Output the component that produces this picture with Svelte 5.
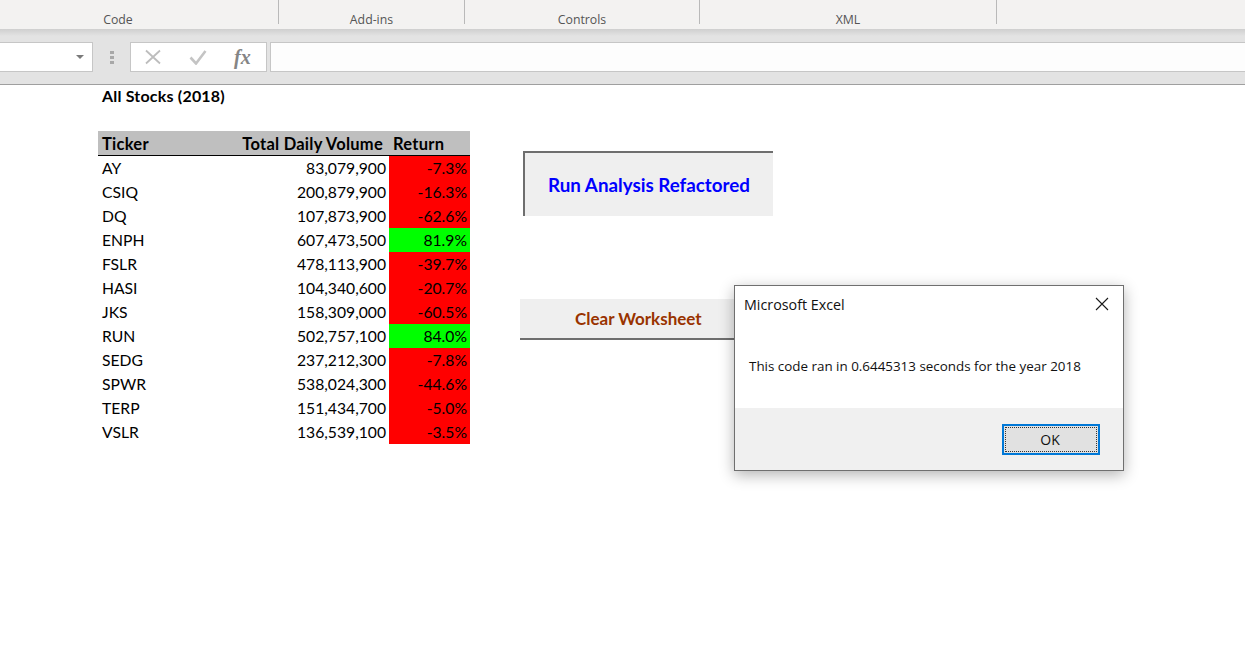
<script>
  const stocks = [
    { ticker: "AY", volume: "83,079,900", ret: "-7.3%" },
    { ticker: "CSIQ", volume: "200,879,900", ret: "-16.3%" },
    { ticker: "DQ", volume: "107,873,900", ret: "-62.6%" },
    { ticker: "ENPH", volume: "607,473,500", ret: "81.9%" },
    { ticker: "FSLR", volume: "478,113,900", ret: "-39.7%" },
    { ticker: "HASI", volume: "104,340,600", ret: "-20.7%" },
    { ticker: "JKS", volume: "158,309,000", ret: "-60.5%" },
    { ticker: "RUN", volume: "502,757,100", ret: "84.0%" },
    { ticker: "SEDG", volume: "237,212,300", ret: "-7.8%" },
    { ticker: "SPWR", volume: "538,024,300", ret: "-44.6%" },
    { ticker: "TERP", volume: "151,434,700", ret: "-5.0%" },
    { ticker: "VSLR", volume: "136,539,100", ret: "-3.5%" }
  ];
</script>

<div class="page">
  <div class="ribbon">
    <div class="group code">Code</div>
    <div class="group addins">Add-ins</div>
    <div class="group controls">Controls</div>
    <div class="group xml">XML</div>
  </div>

  <div class="formula">
    <div class="namebox">
      <svg width="8" height="4" viewBox="0 0 8 4"><path d="M0 0h8L4 4z" fill="#7a7a7a" /></svg>
    </div>
    <div class="grip"><i></i><i></i><i></i></div>
    <div class="fxbox">
      <svg width="18" height="16" viewBox="0 0 18 16"><path d="M2 1.500l14 13M16 1.500l-14 13" stroke="#bdbdbd" stroke-width="1.800" fill="none" /></svg>
      <svg width="18" height="16" viewBox="0 0 18 16"><path d="M1.500 8.500l5.500 6L16.500 2" stroke="#c4c4c4" stroke-width="2.600" fill="none" /></svg>
      <span class="fx">fx</span>
    </div>
    <div class="input"></div>
  </div>

  <div class="sheet">
    <div class="left">
      <div class="title">All Stocks (2018)</div>
      <div class="table">
        <div class="row head">
          <div class="c1">Ticker</div>
          <div class="c2">Total Daily Volume</div>
          <div class="c3">Return</div>
        </div>
        {#each stocks as s}
          <div class="row">
            <div class="c1">{s.ticker}</div>
            <div class="c2">{s.volume}</div>
            <div class="c3" class:up={!s.ret.startsWith("-")}>{s.ret}</div>
          </div>
        {/each}
      </div>
    </div>
    <div class="buttons">
      <div class="run">Run Analysis Refactored</div>
      <div class="clear"><span>Clear Worksheet</span></div>
    </div>
  </div>

  <div class="dialog">
    <div class="dlg-title">
      <span>Microsoft Excel</span>
      <svg width="14" height="14" viewBox="0 0 14 14"><path d="M1 1l12 12M13 1L1 13" stroke="#1a1a1a" stroke-width="1.100" fill="none" /></svg>
    </div>
    <div class="dlg-body">This code ran in 0.6445313 seconds for the year 2018</div>
    <div class="dlg-foot">
      <div class="ok"><span>OK</span></div>
    </div>
  </div>
</div>

<style>
  :global(body) {
    margin: 0;
    background: #fff;
  }

  .page {
    width: 1245px;
    height: 667px;
    position: relative;
    overflow: hidden;
    font-family: Lato, sans-serif;
    color: #000;
  }

  .ribbon {
    height: 29px;
    background: #f3f2f1;
    display: flex;
    align-items: flex-start;
    font-family: "Open Sans", sans-serif;
    font-size: 12.300px;
    color: #555;
  }

  .group {
    height: 24px;
    box-sizing: border-box;
    border-right: 1px solid #b9b9b9;
    text-align: center;
    padding-top: 12px;
    line-height: 16px;
  }

  .code { width: 279px; padding-right: 42px; }
  .addins { width: 186px; }
  .controls { width: 235px; }
  .xml { width: 297px; }

  .formula {
    height: 56px;
    box-sizing: border-box;
    border-bottom: 1px solid #9f9f9f;
    background: linear-gradient(#cfcfcf, #e3e3e3 7px);
    padding-top: 13px;
    display: flex;
    align-items: flex-start;
  }

  .namebox {
    width: 93px;
    height: 30px;
    box-sizing: border-box;
    background: #fff;
    border: 1px solid #c6c6c6;
    border-left: none;
    display: flex;
    align-items: center;
    justify-content: flex-end;
    padding-right: 8px;
  }

  .grip {
    width: 37px;
    height: 30px;
    display: flex;
    flex-direction: column;
    align-items: center;
    justify-content: center;
    gap: 2px;
  }

  .grip i {
    width: 4px;
    height: 3px;
    background: #a8a8a8;
  }

  .fxbox {
    width: 137px;
    height: 30px;
    box-sizing: border-box;
    background: #fff;
    border: 1px solid #c6c6c6;
    display: flex;
    align-items: center;
    padding-left: 13px;
    gap: 27px;
  }

  .fx {
    font-family: "Liberation Serif", serif;
    font-style: italic;
    font-weight: 700;
    font-size: 20px;
    color: #858585;
    margin-left: 0;
  }

  .input {
    flex: 1;
    height: 30px;
    box-sizing: border-box;
    margin-left: 3px;
    background: #fdfdfd;
    border: 1px solid #c6c6c6;
    border-right: none;
  }

  .sheet {
    display: flex;
    align-items: flex-start;
    padding-left: 98px;
  }

  .title {
    height: 23px;
    line-height: 22px;
    padding-left: 4px;
    font-size: 16px;
    letter-spacing: 0.2px;
    font-weight: 700;
  }

  .table {
    width: 372px;
    margin-top: 23px;
    font-size: 15.700px;
  }

  .row {
    display: grid;
    grid-template-columns: 101px 190px 81px;
    height: 24px;
    line-height: 24px;
  }

  .c1 { padding-left: 4px; }
  .c2 { text-align: right; padding-right: 3px; }
  .c3 {
    text-align: right;
    padding-right: 3px;
    background: #ff0000;
  }
  .c3.up { background: #00ff00; }

  .head {
    height: 25px;
    background: #bfbfbf;
    box-sizing: border-box;
    border-bottom: 1px solid #000;
    font-weight: 700;
    font-size: 16.500px;
    letter-spacing: 0.25px;
    line-height: 27px;
  }

  .head .c2 { padding-right: 6px; }
  .head .c3 {
    background: none;
    text-align: left;
    padding-left: 4px;
  }

  .buttons {
    margin-left: 50px;
    padding-top: 66px;
    display: flex;
    flex-direction: column;
  }

  .run {
    margin-left: 3px;
    width: 250px;
    height: 65px;
    box-sizing: border-box;
    background: #efefef;
    border-top: 2px solid #6e6e6e;
    border-left: 2px solid #6e6e6e;
    display: flex;
    align-items: center;
    justify-content: center;
    color: #0000ff;
    font-weight: 700;
    font-size: 18.800px;
  }

  .clear {
    margin-top: 83px;
    width: 250px;
    height: 41px;
    box-sizing: border-box;
    background: #efefef;
    border-bottom: 2px solid #6e6e6e;
    padding: 0 0 0 55px;
    line-height: 39px;
    color: #993300;
    font-weight: 700;
    font-size: 17px;
  }

  .dialog {
    position: absolute;
    left: 734px;
    top: 285px;
    width: 390px;
    height: 186px;
    box-sizing: border-box;
    background: #fff;
    border: 1px solid #6f6f6f;
    box-shadow: 0 4px 14px rgba(0, 0, 0, 0.3);
    display: flex;
    flex-direction: column;
    font-family: "Open Sans", sans-serif;
    color: #111;
  }

  .dlg-title {
    height: 36px;
    display: flex;
    align-items: center;
    justify-content: space-between;
    padding: 0 14px 0 9px;
    font-size: 14.300px;
  }

  .dlg-body {
    flex: 1;
    padding: 35px 0 0 14px;
    font-size: 13.400px;
    line-height: 18px;
  }

  .dlg-foot {
    height: 62px;
    background: #f0f0f0;
    display: flex;
    justify-content: flex-end;
    padding: 16px 23px 0 0;
    box-sizing: border-box;
  }

  .ok {
    width: 98px;
    height: 31px;
    box-sizing: border-box;
    border: 2px solid #0078d7;
    background: #e1e1e1;
    padding: 1px;
  }

  .ok span {
    display: block;
    height: 100%;
    box-sizing: border-box;
    border: 1px dotted #333;
    padding-right: 2px;
    text-align: center;
    line-height: 23px;
    font-size: 14px;
  }
</style>
